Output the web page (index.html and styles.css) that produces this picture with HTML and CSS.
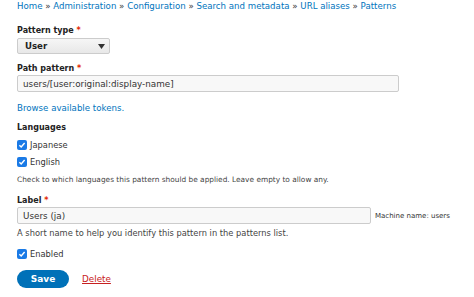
FILE: index.html
```html
<!DOCTYPE html>
<html>
<head>
<meta charset="utf-8">
<link rel="stylesheet" href="styles.css">
</head>
<body>
<div class="page">
  <nav class="breadcrumb">
    <a href="#">Home</a> » <a href="#">Administration</a> » <a href="#">Configuration</a> » <a href="#">Search and metadata</a> » <a href="#">URL aliases</a> » <a href="#">Patterns</a>
  </nav>

  <div class="field field-type">
    <label class="label">Pattern type <span class="req">*</span></label>
    <div class="select">
      <span>User</span>
      <svg class="arrow" width="7" height="5" viewBox="0 0 7 5"><path d="M0 0h7L3.5 5z" fill="#333"/></svg>
    </div>
  </div>

  <div class="field field-path">
    <label class="label">Path pattern <span class="req">*</span></label>
    <div class="input input-path">users/[user:original:display-name]</div>
  </div>

  <a class="browse" href="#">Browse available tokens.</a>

  <div class="field field-lang">
    <label class="label">Languages</label>
    <div class="check"><span class="box"><svg width="8" height="8" viewBox="0 0 8 8"><path d="M1.4 4.2l1.8 1.8L6.6 2" fill="none" stroke="#fff" stroke-width="1.4"/></svg></span>Japanese</div>
    <div class="check"><span class="box"><svg width="8" height="8" viewBox="0 0 8 8"><path d="M1.4 4.2l1.8 1.8L6.6 2" fill="none" stroke="#fff" stroke-width="1.4"/></svg></span>English</div>
    <div class="help help-small">Check to which languages this pattern should be applied. Leave empty to allow any.</div>
  </div>

  <div class="field field-label">
    <label class="label">Label <span class="req">*</span></label>
    <div class="row">
      <div class="input input-label">Users (ja)</div>
      <span class="machine">Machine name: users</span>
    </div>
    <div class="help help-large">A short name to help you identify this pattern in the patterns list.</div>
  </div>

  <div class="check check-enabled"><span class="box"><svg width="8" height="8" viewBox="0 0 8 8"><path d="M1.4 4.2l1.8 1.8L6.6 2" fill="none" stroke="#fff" stroke-width="1.4"/></svg></span>Enabled</div>

  <div class="actions">
    <button class="save">Save</button>
    <a class="delete" href="#">Delete</a>
  </div>
</div>
</body>
</html>
```

FILE: styles.css
```css
html, body {
  margin: 0;
  padding: 0;
  background: #fff;
}
.page {
  padding: 1px 17px 0 17px;
  font-family: "DejaVu Sans", Verdana, sans-serif;
  font-size: 8px;
  color: #333;
  line-height: 10px;
}
a {
  color: #0074bd;
  text-decoration: none;
}
.breadcrumb {
  font-size: 8.65px;
  line-height: 10px;
}
.breadcrumb a { color: #0074bd; }
.field { display: flex; flex-direction: column; }
.label {
  font-weight: bold;
  color: #222;
  line-height: 10px;
}
.req { color: #e32700; }
.field-type { margin-top: 15px; }
.select {
  margin-top: 2px;
  width: 93px;
  height: 16px;
  box-sizing: border-box;
  border: 1px solid #ccc;
  border-radius: 2px;
  background: linear-gradient(#f6f6f6, #e8e8e8);
  display: flex;
  align-items: center;
  justify-content: space-between;
  padding: 0 4px 0 7px;
  font-size: 8.6px;
  color: #222;
  font-weight: bold;
}
.field-path { margin-top: 10px; }
.input {
  margin-top: 1px;
  height: 17px;
  box-sizing: border-box;
  border: 1px solid #ccc;
  border-radius: 2px;
  background: #f8f8f8;
  padding: 0 5px;
  display: flex;
  align-items: center;
  color: #333;
  font-size: 8.8px;
}
.input-path { width: 382px; }
.browse {
  display: block;
  margin-top: 11px;
  font-size: 8.65px;
}
.field-lang { margin-top: 10px; }
.check {
  display: flex;
  align-items: center;
  gap: 3px;
  margin-top: 7px;
  font-size: 8.3px;
  color: #333;
}
.box {
  width: 10px;
  height: 10px;
  border-radius: 2px;
  background: #1a7ae6;
  display: flex;
  align-items: center;
  justify-content: center;
}
.help {
  margin-top: 8px;
  color: #444;
}
.help-small { font-size: 7.4px; }
.help-large { font-size: 8.3px; }
.field-label { margin-top: 11px; }
.row {
  display: flex;
  align-items: center;
  gap: 4px;
}
.input-label { width: 354px; }
.machine {
  margin-top: 1px;
  font-size: 7px;
  color: #333;
}
.field-label .help { margin-top: 4px; }
.check-enabled { margin-top: 11px; }
.actions {
  margin-top: 11px;
  display: flex;
  align-items: center;
  gap: 13px;
}
.save {
  width: 52px;
  height: 18px;
  border: none;
  border-radius: 9px;
  background: #0071b8;
  color: #fff;
  font-family: "DejaVu Sans", Verdana, sans-serif;
  font-weight: bold;
  font-size: 9px;
  padding: 0;
}
.delete {
  color: #c72020;
  text-decoration: underline;
  font-size: 8.8px;
}
```
